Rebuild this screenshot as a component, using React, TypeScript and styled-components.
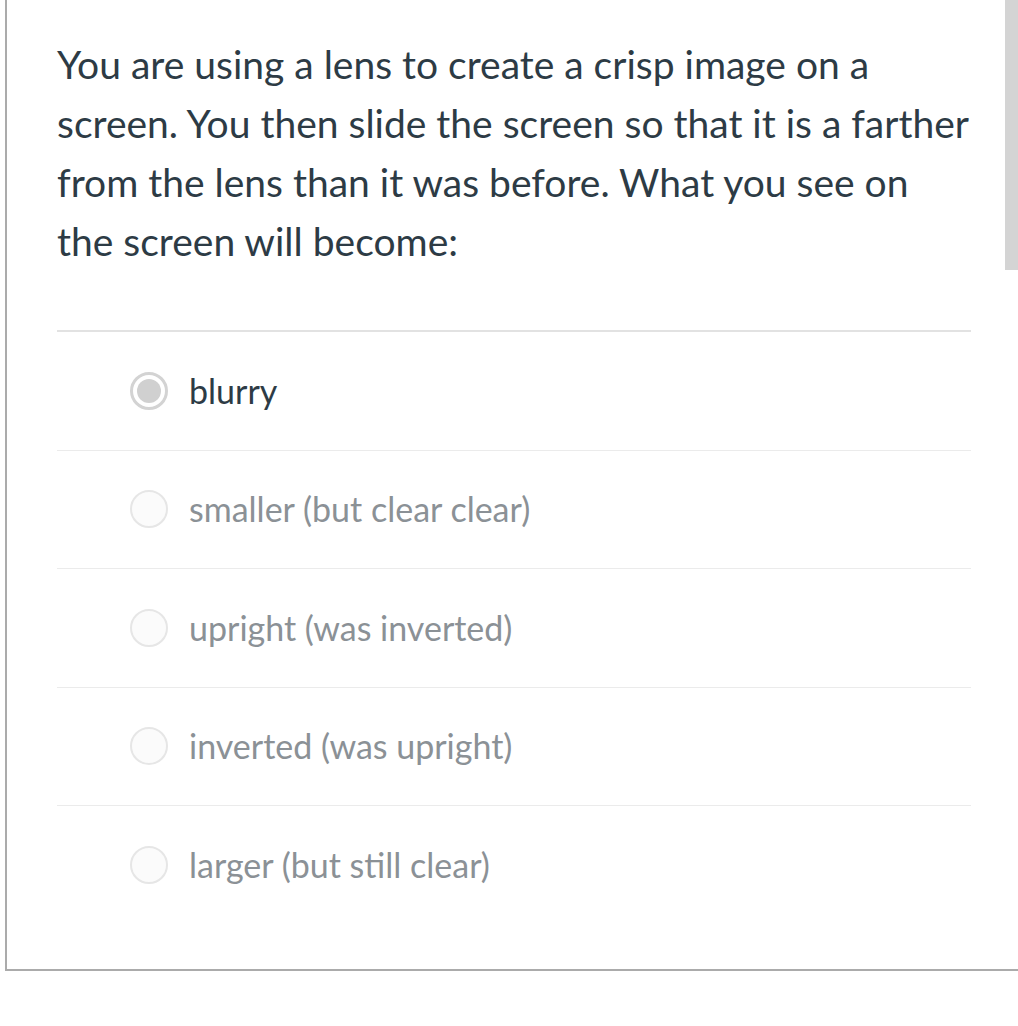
import styled, { createGlobalStyle } from "styled-components";

const Global = createGlobalStyle`
  html, body {
    margin: 0;
    padding: 0;
    background: #ffffff;
    overflow: hidden;
  }
  body {
    font-family: Lato, "Liberation Sans", sans-serif;
  }
`;

// Page frame
const Page = styled.div`
  position: relative;
  width: 1018px;
  height: 1026px;
  overflow: hidden;
`;

// Question card, cut on the top and right
const Card = styled.div`
  margin-left: 5px;
  width: 1040px;
  height: 971px;
  border-left: 2px solid #ababab;
  border-bottom: 2px solid #ababab;
  padding: 35px 0 0 50px;
  box-sizing: border-box;
`;

const Question = styled.p`
  margin: 0;
  width: 916px;
  font-size: 39px;
  line-height: 59px;
  color: #2d3b45;
`;

const Answers = styled.ul`
  list-style: none;
  margin: 59px 0 0;
  padding: 0;
  width: 914px;
  border-top: 2px solid #e2e2e2;
`;

const Answer = styled.li`
  display: flex;
  align-items: center;
  gap: 21px;
  height: 117.5px;
  padding-left: 73px;
  border-bottom: 1px solid #ebebeb;

  &:last-child {
    border-bottom: none;
  }
`;

const Radio = styled.span<{ $checked: boolean }>`
  flex: none;
  width: 38px;
  height: 38px;
  border-radius: 50%;
  box-sizing: border-box;
  display: flex;
  align-items: center;
  justify-content: center;
  background: ${(p) => (p.$checked ? "#ffffff" : "#fbfbfb")};
  border: ${(p) => (p.$checked ? "3px solid #d3d3d3" : "2px solid #e6e6e6")};

  &::after {
    content: "";
    display: ${(p) => (p.$checked ? "block" : "none")};
    width: 24px;
    height: 24px;
    border-radius: 50%;
    background: #d0d0d0;
  }
`;

const Label = styled.span<{ $checked: boolean }>`
  font-size: 34px;
  line-height: 40px;
  color: ${(p) => (p.$checked ? "#2d3b45" : "#8b9196")};
`;

// Overlay scrollbar thumb
const ScrollThumb = styled.div`
  position: absolute;
  top: 0;
  right: 0;
  width: 13px;
  height: 270px;
  background: #d4d4d4;
`;

const options = [
  "blurry",
  "smaller (but clear clear)",
  "upright (was inverted)",
  "inverted (was upright)",
  "larger (but still clear)",
];

export default function App() {
  const selected = 0;
  return (
    <Page>
      <Global />
      <Card>
        <Question>
          You are using a lens to create a crisp image on a screen. You then
          slide the screen so that it is a farther from the lens than it was
          before. What you see on the screen will become:
        </Question>
        <Answers>
          {options.map((o, i) => (
            <Answer key={o}>
              <Radio $checked={i === selected} />
              <Label $checked={i === selected}>{o}</Label>
            </Answer>
          ))}
        </Answers>
      </Card>
      <ScrollThumb />
    </Page>
  );
}
